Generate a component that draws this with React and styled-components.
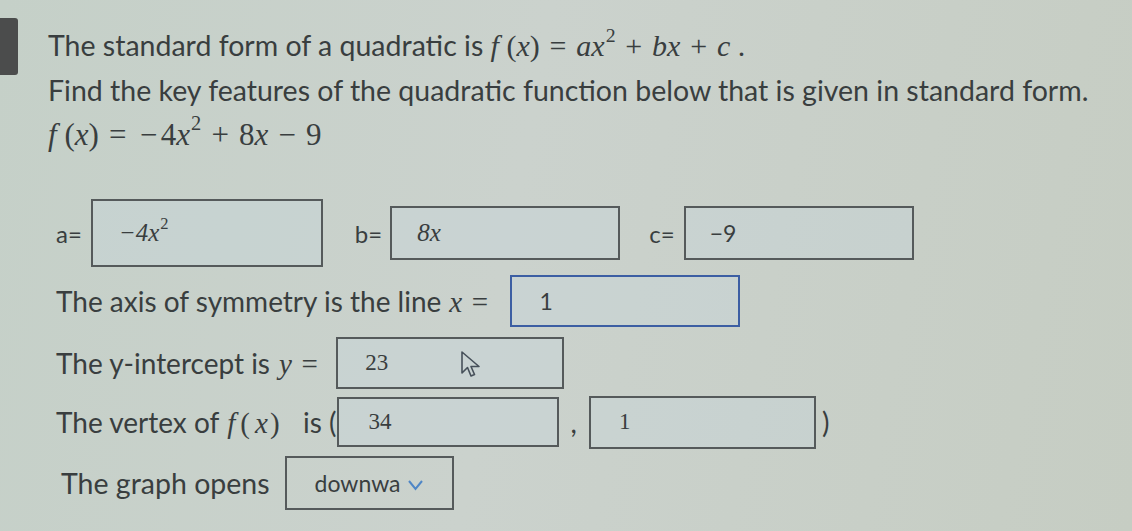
import styled, { createGlobalStyle } from 'styled-components'

const Global = createGlobalStyle`
  html, body {
    margin: 0;
    padding: 0;
  }
  body {
    width: 1132px;
    height: 531px;
    overflow: hidden;
    background: linear-gradient(100deg, #c5d0c8 0%, #cbd2cd 45%, #c6cdc3 100%);
    font-family: Lato, "Open Sans", sans-serif;
    color: #393e3f;
  }
`

const Page = styled.div`
  position: relative;
  height: 531px;
`

const Header = styled.div`
  display: flex;
  align-items: flex-start;
`

const Bar = styled.div`
  width: 18px;
  height: 57px;
  margin-top: 18px;
  background: #4b4c4c;
  border-radius: 0 3px 3px 0;
  flex: none;
`

const Intro = styled.div`
  margin-left: 30px;
  padding-top: 23px;
  display: flex;
  flex-direction: column;
`

const Line = styled.div`
  font-size: 28.5px;
  line-height: 44px;
  white-space: nowrap;
`

const Math = styled.span`
  font-family: "Liberation Serif", "DejaVu Serif", serif;
  font-style: ${p => (p.$up ? 'normal' : 'italic')};
  font-size: ${p => p.$size || 30}px;
  margin-left: ${p => p.$ml || 0}px;

  sup {
    font-size: 0.66em;
    font-style: normal;
    vertical-align: 0.72em;
    line-height: 0;
    margin-left: 1px;
  }
`

const Up = styled.span`
  font-style: normal;
  margin: 0 ${p => p.$m || 0}px;
`

const Op = styled.span`
  display: inline-block;
  font-style: normal;
  width: 0.78em;
  text-align: center;
  margin: 0 ${p => (p.$unary ? 0 : 0.22)}em;
`

const Questions = styled.div`
  padding-left: 56px;
  padding-top: 40px;
  display: flex;
  flex-direction: column;
`

const Row = styled.div`
  display: flex;
  align-items: center;
  height: ${p => p.$h || 62}px;
  font-size: 28px;
  white-space: nowrap;
`

const Coef = styled.div`
  display: flex;
  align-items: center;
  margin-right: ${p => p.$gap || 30}px;
`

const Label = styled.span`
  font-size: ${p => p.$size || 28}px;
  margin-right: ${p => p.$mr ?? 6}px;
  padding-left: ${p => p.$pl || 0}px;
`

const Box = styled.div`
  position: relative;
  width: ${p => p.$w || 228}px;
  height: ${p => p.$h || 52}px;
  box-sizing: border-box;
  border: 2px solid ${p => (p.$focus ? '#3c5ea3' : '#555a5b')};
  background: rgba(200, 214, 224, 0.3);
  display: flex;
  align-items: center;
  padding-left: ${p => p.$pl || 27}px;
  font-family: ${p => (p.$sans ? 'Lato, sans-serif' : '"Liberation Serif", serif')};
  font-size: 23px;
  color: #393e3f;
`

const Paren = styled.span`
  font-size: 28px;
  margin: 0 ${p => p.$m || 6}px;
`

const Select = styled.div`
  width: 169px;
  height: 54px;
  box-sizing: border-box;
  border: 2px solid #555a5b;
  display: flex;
  align-items: center;
  padding-left: 28px;
  font-size: 23px;
  color: #393e3f;
  margin-left: 15px;
`

const Chevron = styled.svg`
  margin-left: 6px;
  margin-top: 3px;
  width: 17px;
  height: 12px;
`

const Cursor = styled.svg`
  position: absolute;
  left: 122px;
  top: 11px;
  width: 22px;
  height: 28px;
`

export default function App() {
  return (
    <Page>
      <Global />
      <Header>
        <Bar />
        <Intro>
          <Line>
            The standard form of a quadratic is{' '}
            <Math>
              f <Up>(</Up>x<Up>)</Up>
              <Op>=</Op>ax<sup>2</sup>
              <Op>+</Op>bx<Op>+</Op>c
            </Math>
            <Math $up> .</Math>
          </Line>
          <Line>Find the key features of the quadratic function below that is given in standard form.</Line>
          <Line>
            <Math $size={31}>
              f <Up>(</Up>x<Up>)</Up>
              <Op>=</Op>
              <Op $unary>−</Op>
              <Up>4</Up>x<sup>2</sup>
              <Op>+</Op>
              <Up>8</Up>x<Op>−</Op>
              <Up>9</Up>
            </Math>
          </Line>
        </Intro>
      </Header>

      <Questions>
        <Row $h={72}>
          <Coef $gap={32}>
            <Label $mr={9} $size={24}>a=</Label>
            <Box $w={232} $h={68} $pl={26}>
              <Math $size={25}>−4x<sup>2</sup></Math>
            </Box>
          </Coef>
          <Coef $gap={29}>
            <Label $mr={8} $size={24}>b=</Label>
            <Box $w={230} $h={54} $pl={25}>
              <Math $size={25}>8x</Math>
            </Box>
          </Coef>
          <Coef>
            <Label $mr={9} $size={24}>c=</Label>
            <Box $w={230} $h={54} $pl={24} $sans>−9</Box>
          </Coef>
        </Row>

        <Row $h={64}>
          <Label $mr={12}>
            The axis of symmetry is the line
            <Math $size={29} $ml={8}>x</Math>
            <Math $size={29}><Op>=</Op></Math>
          </Label>
          <Box $w={230} $h={52} $pl={28} $focus $sans>1</Box>
        </Row>

        <Row $h={60}>
          <Label $mr={9}>
            The y-intercept is
            <Math $size={29} $ml={9}>y</Math>
            <Math $size={29}><Op>=</Op></Math>
          </Label>
          <Box $w={228} $h={52} $pl={27}>
            23
            <Cursor viewBox="0 0 22 28">
              <path
                d="M2 2 L2 23 L7.5 17.5 L11 26 L14.5 24.5 L11 16.5 L19 16.5 Z"
                fill="none"
                stroke="#46505a"
                strokeWidth="1.6"
                strokeLinejoin="round"
              />
            </Cursor>
          </Box>
        </Row>

        <Row $h={58}>
          <Label $mr={0}>
            The vertex of
            <Math $size={29} $ml={8}>f</Math>
            <Math $up $size={29}>
              <Up $m={5}>(</Up>
            </Math>
            <Math $size={29}>x</Math>
            <Math $up $size={29}>
              <Up $m={2}>)</Up>
            </Math>
            &nbsp;&nbsp;&nbsp;is (
          </Label>
          <Box $w={222} $h={50} $pl={30}>34</Box>
          <Paren $m={12}>,</Paren>
          <Box $w={227} $h={53} $pl={28}>1</Box>
          <Paren>)</Paren>
        </Row>

        <Row $h={64}>
          <Label $mr={0} $pl={5} $size={28.5}>The graph opens</Label>
          <Select>
            downwa
            <Chevron viewBox="0 0 17 12">
              <path d="M2 2 L8.5 10 L15 2" fill="none" stroke="#4f86c6" strokeWidth="2" />
            </Chevron>
          </Select>
        </Row>
      </Questions>
    </Page>
  )
}
